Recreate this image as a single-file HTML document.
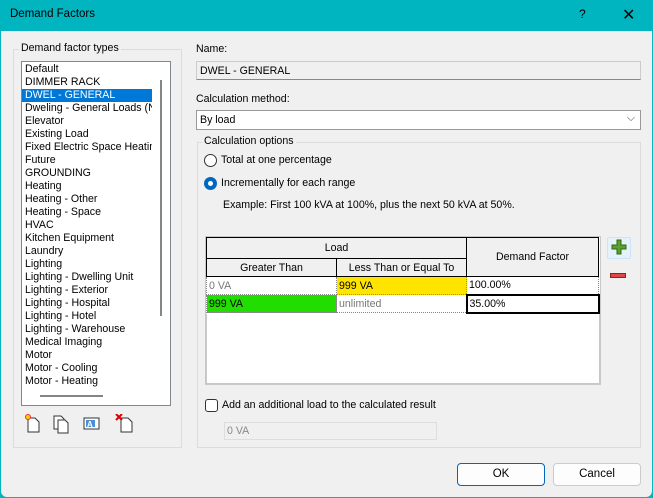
<!DOCTYPE html>
<html><head><meta charset="utf-8"><style>
*{box-sizing:border-box;margin:0;padding:0}
body{width:653px;height:498px;overflow:hidden;background:#00b4c0;font-family:"Liberation Sans",sans-serif;font-size:10.6px;color:#000}
.win{position:absolute;left:1px;top:31px;width:651px;height:466px;background:#f0f0f0;border-radius:0 0 6px 6px}
.a{position:absolute;white-space:nowrap}
.grp{position:absolute;border:1px solid #dcdcdc}
.lbl{position:absolute;background:#f0f0f0;padding:0 2px}
.list div{height:13px;line-height:13px;padding-left:3px}
.box{position:absolute;border:1px solid #d0d0d0;background:#fff}
td{border:1px solid #000;padding:0 2px;height:18px;font-size:10.6px}
</style></head><body>
<div class="a" style="left:10px;top:8px;font-size:11.5px">Demand Factors</div>
<div class="a" style="left:579px;top:7px;font-size:12px">?</div>
<div class="a" style="left:622px;top:5px;font-size:16px;font-weight:300">✕</div>
<div class="win"></div>

<div class="grp" style="left:13px;top:49px;width:169px;height:399px"></div>
<div class="lbl a" style="left:19px;top:42px">Demand factor types</div>
<div class="box list" style="left:21px;top:61px;width:150px;height:345px;border-color:#828790;overflow:hidden;padding-top:1px">
<div>Default</div><div>DIMMER RACK</div><div style="background:#0078d7;color:#fff;width:131px">DWEL - GENERAL</div><div>Dweling - General Loads (N</div><div>Elevator</div><div>Existing Load</div><div>Fixed Electric Space Heatin</div><div>Future</div><div>GROUNDING</div><div>Heating</div><div>Heating - Other</div><div>Heating - Space</div><div>HVAC</div><div>Kitchen Equipment</div><div>Laundry</div><div>Lighting</div><div>Lighting - Dwelling Unit</div><div>Lighting - Exterior</div><div>Lighting - Hospital</div><div>Lighting - Hotel</div><div>Lighting - Warehouse</div><div>Medical Imaging</div><div>Motor</div><div>Motor - Cooling</div><div>Motor - Heating</div>
</div>
<div class="a" style="left:152px;top:62px;width:18px;height:324px;background:#fff"></div>
<div class="a" style="left:160px;top:80px;width:2px;height:236px;background:#858585"></div>
<div class="a" style="left:22px;top:387px;width:148px;height:18px;background:#fff"></div>
<div class="a" style="left:40px;top:395px;width:63px;height:2px;background:#858585"></div>
<svg class="a" style="left:24px;top:414px" width="120" height="20">
<path d="M4 4h7l4 4v10H4z" fill="#fff" stroke="#333"/><circle cx="4" cy="3" r="2.5" fill="#fc0" stroke="#e33"/>
<path d="M30 2h7l3 3v10H30z" fill="#fff" stroke="#333"/><path d="M34 6h7l3 3v10H34z" fill="#fff" stroke="#333"/>
<rect x="60" y="4" width="15" height="11" fill="#fff" stroke="#333"/><rect x="62" y="6" width="9" height="7" fill="#4a90d9"/><text x="63" y="13" font-size="8" fill="#fff" font-weight="bold">A</text>
<path d="M97 4h7l4 4v10H97z" fill="#fff" stroke="#333"/><path d="M92 0l6 6M98 0l-6 6" stroke="#d00" stroke-width="2"/>
</svg>

<div class="a" style="left:196px;top:43px">Name:</div>
<div class="box" style="left:196px;top:61px;width:445px;height:19px;background:#f0f0f0;border-color:#ccc;border-bottom-color:#888;padding:3px 3px">DWEL - GENERAL</div>
<div class="a" style="left:196px;top:93px">Calculation method:</div>
<div class="box" style="left:196px;top:110px;width:445px;height:20px;border-color:#999;padding:3px 3px">By load<span class="a" style="right:5px;top:1px;color:#555">⌵</span></div>

<div class="grp" style="left:197px;top:142px;width:444px;height:306px"></div>
<div class="lbl a" style="left:202px;top:135px">Calculation options</div>
<div class="a" style="left:204px;top:154px;width:13px;height:13px;border:1px solid #333;border-radius:50%;background:#fff"></div>
<div class="a" style="left:221px;top:154px">Total at one percentage</div>
<div class="a" style="left:204px;top:177px;width:13px;height:13px;border-radius:50%;background:#0067c0"><div class="a" style="left:4px;top:4px;width:5px;height:5px;border-radius:50%;background:#fff"></div></div>
<div class="a" style="left:221px;top:177px">Incrementally for each range</div>
<div class="a" style="left:223px;top:199px">Example: First 100 kVA at 100%, plus the next 50 kVA at 50%.</div>

<div class="box" style="left:205px;top:236px;width:396px;height:149px;border:2px solid #c8c8c8"></div>
<table class="a" style="left:206px;top:237px;border-collapse:collapse;background:#fff">
<tr style="background:#f0f0f0"><td colspan="2" style="text-align:center;height:21px">Load</td><td rowspan="2" style="text-align:center;width:132px">Demand Factor</td></tr>
<tr style="background:#f0f0f0"><td style="text-align:center;width:130px">Greater Than</td><td style="text-align:center;width:130px">Less Than or Equal To</td></tr>
<tr><td style="border:1px dotted #888;color:#777">0 VA</td><td style="border:1px dotted #888;background:#ffe400">999 VA</td><td style="border:1px dotted #888">100.00%</td></tr>
<tr><td style="border:1px dotted #888;background:#22dd00">999 VA</td><td style="border:1px dotted #888;color:#777">unlimited</td><td style="border:2px solid #000">35.00%</td></tr>
</table>
<div class="a" style="left:607px;top:237px;width:24px;height:22px;background:#e5f1fb;border:1px solid #cce4f7;border-radius:2px"></div>
<svg class="a" style="left:611px;top:239px" width="16" height="16"><path d="M6 1h4v5h5v4h-5v5H6v-5H1V6h5z" fill="#5aa02c" stroke="#2f6a14"/></svg>
<div class="a" style="left:610px;top:273px;width:16px;height:5px;background:#e04848;border:1px solid #a01818"></div>

<div class="a" style="left:205px;top:399px;width:13px;height:13px;border:1px solid #333;border-radius:3px;background:#fff"></div>
<div class="a" style="left:222px;top:399px">Add an additional load to the calculated result</div>
<div class="box" style="left:224px;top:422px;width:213px;height:18px;background:#f0f0f0;border-color:#ddd;color:#888;padding:2px 2px">0 VA</div>

<div class="a" style="left:457px;top:463px;width:88px;height:23px;border:1px solid #0067c0;border-radius:4px;background:#fdfdfd;text-align:center;line-height:21px;font-size:11.5px">OK</div>
<div class="a" style="left:553px;top:463px;width:88px;height:23px;border:1px solid #ccc;border-radius:4px;background:#fdfdfd;text-align:center;line-height:21px;font-size:11.5px">Cancel</div>
</body></html>
